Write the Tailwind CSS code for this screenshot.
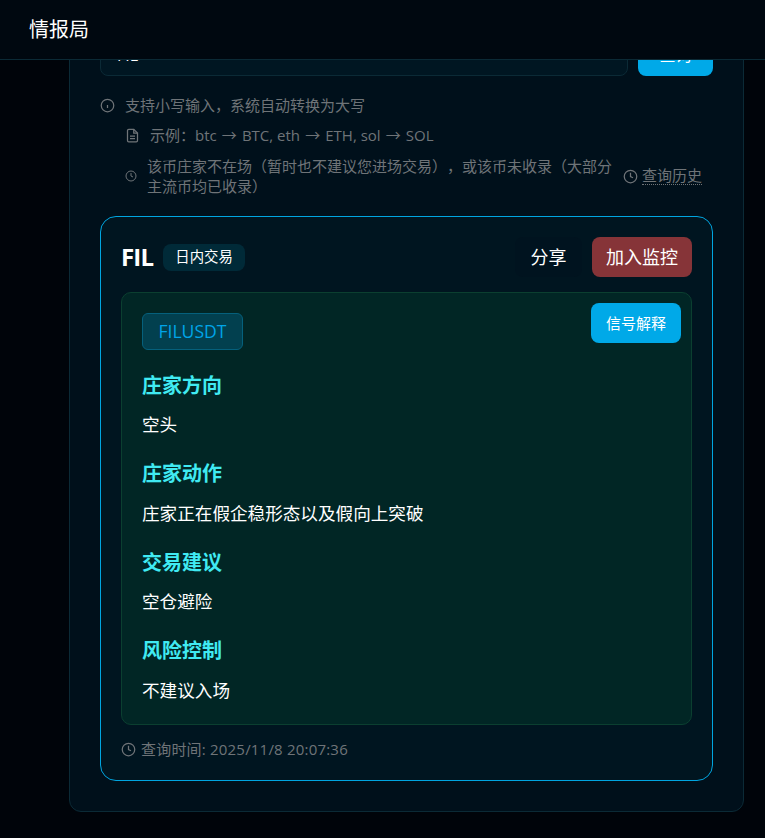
<!DOCTYPE html>
<html lang="zh-CN">
<head>
  <meta charset="UTF-8" />
  <meta name="viewport" content="width=device-width, initial-scale=1.0"/>
  <title>情报局</title>
  <script src="https://cdn.jsdelivr.net/npm/@tailwindcss/browser@4"></script>
</head>
<body class="h-[838px] overflow-hidden bg-[#00040a] font-['Open_Sans','Noto_Sans_CJK_SC',sans-serif]">

  <!-- Header -->
  <header class="fixed top-0 inset-x-0 z-10 h-[60px] flex items-center pl-[29px] bg-[#000810] border-b border-[#0b2a36]">
    <span class="text-[20px] text-white">情报局</span>
  </header>

  <!-- Search panel, scrolled so the input sits under the header -->
  <main class="mt-[-5px] ml-[69px] w-[675px] h-[817px] px-[30px] pt-[38px] bg-[#00101b] border border-[#0b2a36] rounded-[12px]">

    <div class="flex gap-[10px] h-[42px]">
      <div class="flex-1 flex items-center px-[16px] bg-[#001622] border border-[#0b2a36] rounded-[8px] text-white text-[16px]">FIL</div>
      <button class="w-[75px] rounded-[8px] bg-[#00a9e8] text-white text-[16px]">查询</button>
    </div>

    <!-- Tips -->
    <div class="mt-[19px] text-[15px] leading-[20px] text-[#6f7478] [text-spacing-trim:space-all]">
      <div class="flex items-center gap-[10px]">
        <svg class="w-[15px] h-[15px]" viewBox="0 0 24 24" fill="none" stroke="currentColor" stroke-width="2"><circle cx="12" cy="12" r="10"/><path d="M12 16v-5M12 8h.01"/></svg>
        <span>支持小写输入，系统自动转换为大写</span>
      </div>
      <div class="flex items-center gap-[10px] mt-[10px] pl-[25px]">
        <svg class="w-[15px] h-[15px]" viewBox="0 0 24 24" fill="none" stroke="currentColor" stroke-width="2"><path d="M14 2H6a2 2 0 0 0-2 2v16a2 2 0 0 0 2 2h12a2 2 0 0 0 2-2V8z"/><path d="M14 2v6h6M8 13h8M8 17h8"/></svg>
        <span>示例：btc <span class="mx-[1.2px]">→</span> BTC, eth <span class="mx-[1.2px]">→</span> ETH, sol <span class="mx-[1.2px]">→</span> SOL</span>
      </div>
      <div class="flex items-center mt-[11px] pl-[25px]">
        <svg class="w-[12px] h-[12px] shrink-0" viewBox="0 0 24 24" fill="none" stroke="currentColor" stroke-width="2"><circle cx="12" cy="12" r="10"/><path d="M12 6v6l4 2"/></svg>
        <span class="ml-[10px] w-[470px]">该币庄家不在场（暂时也不建议您进场交易），或该币未收录（大部分主流币均已收录）</span>
        <span class="ml-[6px] flex items-center gap-[4px]">
          <svg class="w-[15px] h-[15px]" viewBox="0 0 24 24" fill="none" stroke="currentColor" stroke-width="2"><circle cx="12" cy="12" r="10"/><path d="M12 6v6l4 2"/></svg>
          <span class="border-b border-dotted border-[#6f7478] leading-[17px]">查询历史</span>
        </span>
      </div>
    </div>

    <!-- Result card -->
    <section class="mt-[20px] h-[565px] px-[20px] pt-[20px] bg-[#001520] border border-[#00a5e0] rounded-[16px]">
      <div class="flex items-center justify-between h-[40px]">
        <div class="flex items-center gap-[10px]">
          <span class="text-[24px] font-bold tracking-[-0.8px] text-white">FIL</span>
          <span class="px-[12px] h-[27px] flex items-center rounded-[8px] bg-[#002a38] text-[14.4px] text-white">日内交易</span>
        </div>
        <div class="flex gap-[10px]">
          <button class="w-[67px] h-[40px] rounded-[8px] bg-[#00131f] text-white text-[18px]">分享</button>
          <button class="w-[100px] h-[40px] rounded-[8px] bg-[#863438] text-white text-[18px]">加入监控</button>
        </div>
      </div>

      <div class="relative mt-[15px] h-[433px] px-[20px] pt-[20px] bg-[#012625] border border-[#0b3f30] rounded-[10px]">
        <button class="absolute top-[10px] right-[10px] w-[90px] h-[40px] rounded-[8px] bg-[#00a9e8] text-white text-[15px]">信号解释</button>
        <span class="inline-flex items-center justify-center w-[101px] h-[37px] rounded-[6px] bg-[#02404f] border border-[#05607c] text-[#00a5e8] text-[17.6px]">FILUSDT</span>

        <h3 class="mt-[21.5px] text-[20px] leading-[28px] font-bold text-[#40eaf2]">庄家方向</h3>
        <p class="mt-[10.5px] text-[17.6px] leading-[28px] text-white">空头</p>
        <h3 class="mt-[22px] text-[20px] leading-[28px] font-bold text-[#40eaf2]">庄家动作</h3>
        <p class="mt-[10.5px] text-[17.6px] leading-[28px] text-white">庄家正在假企稳形态以及假向上突破</p>
        <h3 class="mt-[22px] text-[20px] leading-[28px] font-bold text-[#40eaf2]">交易建议</h3>
        <p class="mt-[10.5px] text-[17.6px] leading-[28px] text-white">空仓避险</p>
        <h3 class="mt-[22px] text-[20px] leading-[28px] font-bold text-[#40eaf2]">风险控制</h3>
        <p class="mt-[10.5px] text-[17.6px] leading-[28px] text-white">不建议入场</p>
      </div>

      <div class="flex items-center gap-[5px] mt-[13px] text-[15px] text-[#6f7478]">
        <svg class="w-[15px] h-[15px]" viewBox="0 0 24 24" fill="none" stroke="currentColor" stroke-width="2"><circle cx="12" cy="12" r="10"/><path d="M12 6v6l4 2"/></svg>
        <span class="tracking-[0.2px]">查询时间: 2025/11/8 20:07:36</span>
      </div>
    </section>
  </main>
</body>
</html>
